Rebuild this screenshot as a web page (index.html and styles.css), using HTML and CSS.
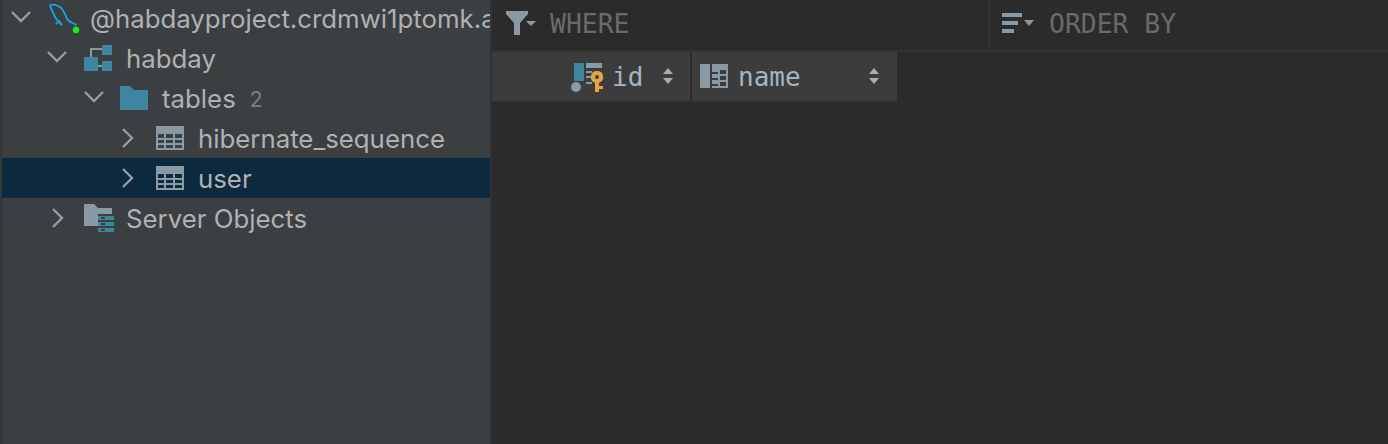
FILE: index.html
```html
<!DOCTYPE html>
<html lang="en">
<head>
  <meta charset="UTF-8" />
  <title>habday - user</title>
  <link rel="stylesheet" href="styles.css">
</head>
<body>
  <div class="app">
    <div class="tree">
      <div class="row level-0">
        <svg class="chevron" viewBox="0 0 20 20"><path d="M2 4l9 9 9-9"/></svg>
        <svg class="icon" viewBox="0 0 32 32">
          <path class="dolphin" d="M2 3c2-.5 5-.5 7 .5 3 1 5 3 6 5 2 3 3 7 5 9.500 1 1.500 3 2.500 5 3 2 .5 3 1 3.500 4M2 3c0 3 3 6 4 10 1 2 2 4 4 6l4 4-3-4-3 3"/>
          <circle class="status" cx="28" cy="28" r="4"/>
        </svg>
        <span class="label">@habdayproject.crdmwi1ptomk.a</span>
      </div>
      <div class="row level-1">
        <svg class="chevron" viewBox="0 0 20 20"><path d="M2 4l9 9 9-9"/></svg>
        <svg class="icon" viewBox="0 0 28 26">
          <path class="link" d="M7 12V4h11M14 21h4"/>
          <rect class="teal" x="18" y="0" width="10" height="10"/>
          <rect class="teal" x="0" y="12" width="14" height="14"/>
          <rect class="teal" x="18" y="16" width="10" height="10"/>
        </svg>
        <span class="label">habday</span>
      </div>
      <div class="row level-2">
        <svg class="chevron" viewBox="0 0 20 20"><path d="M2 4l9 9 9-9"/></svg>
        <svg class="icon" viewBox="0 0 28 24">
          <path class="teal" d="M0 0h10l4 4h14v20H0z"/>
        </svg>
        <span class="label">tables</span>
        <span class="count">2</span>
      </div>
      <div class="row level-3">
        <svg class="chevron" viewBox="0 0 20 20"><path d="M7 1l9 9-9 9"/></svg>
        <svg class="icon" viewBox="0 0 28 24">
          <path class="grey" fill-rule="evenodd" d="M0 0h28v24H0zM2 8v4h6V8zm8 0v4h7V8zm9 0v4h7V8zM2 14v3h6v-3zm8 0v3h7v-3zm9 0v3h7v-3zM2 19v3h6v-3zm8 0v3h7v-3zm9 0v3h7v-3z"/>
        </svg>
        <span class="label">hibernate_sequence</span>
      </div>
      <div class="row level-3 selected">
        <svg class="chevron" viewBox="0 0 20 20"><path d="M7 1l9 9-9 9"/></svg>
        <svg class="icon" viewBox="0 0 28 24">
          <path class="grey" fill-rule="evenodd" d="M0 0h28v24H0zM2 8v4h6V8zm8 0v4h7V8zm9 0v4h7V8zM2 14v3h6v-3zm8 0v3h7v-3zm9 0v3h7v-3zM2 19v3h6v-3zm8 0v3h7v-3zm9 0v3h7v-3z"/>
        </svg>
        <span class="label">user</span>
      </div>
      <div class="row level-1">
        <svg class="chevron" viewBox="0 0 20 20"><path d="M7 1l9 9-9 9"/></svg>
        <svg class="icon server-icon" viewBox="0 0 30 28">
          <path class="grey" d="M0 0h10l4 4h14v6H14v12H0z"/>
          <path class="teal" fill-rule="evenodd" d="M14 12h16v4H14zm3 1v2h4v-2zM14 18h16v4H14zm3 1v2h4v-2zM14 24h16v4H14zm3 1v2h4v-2z"/>
        </svg>
        <span class="label">Server Objects</span>
      </div>
    </div>

    <div class="data">
      <div class="filters">
        <div class="filter where">
          <svg class="filter-icon" viewBox="0 0 32 24">
            <path class="grey" d="M0 0h22v3l-8 9v12H8V12L0 3z"/>
            <path class="grey" d="M20 10h10l-5 5z"/>
          </svg>
          <span>WHERE</span>
        </div>
        <div class="filter order">
          <svg class="filter-icon" viewBox="0 0 32 24">
            <path class="grey" d="M0 2h20v4H0zM0 10h16v4H0zM0 18h12v4H0z"/>
            <path class="grey" d="M22 9h10l-5 6z"/>
          </svg>
          <span>ORDER BY</span>
        </div>
      </div>
      <div class="columns">
        <div class="col col-id">
          <svg class="col-icon key-icon" viewBox="0 0 34 30">
            <rect class="teal" x="3" y="1" width="10" height="18"/>
            <circle class="grey" cx="5" cy="25" r="5"/>
            <path class="grey" d="M15 1h16v5H15zM15 9h6v2h-6zM15 14h5v2h-5zM15 20h6v2h-6z"/>
            <path class="key" fill-rule="evenodd" d="M26 9a6 6 0 0 1 2 11.700V24h4v3h-4v3h-4v-9.300A6 6 0 0 1 26 9zm0 4a2 2 0 1 0 0 4 2 2 0 0 0 0-4z"/>
          </svg>
          <span class="col-name">id</span>
          <svg class="sort" viewBox="0 0 10 16"><path d="M5 0l5 6H0zM0 10h10l-5 6z"/></svg>
        </div>
        <div class="col col-name-cell">
          <svg class="col-icon" viewBox="0 0 28 24">
            <path class="grey" fill-rule="evenodd" d="M0 0h10v24H0zM12 0h16v24H12zm8 6v4h6V6zm0 6v4h6v-4zm0 6v4h6v-4zM12 8v2h6V8zm0 6v2h6v-2zm0 6v2h6v-2z"/>
          </svg>
          <span class="col-name">name</span>
          <svg class="sort" viewBox="0 0 10 16"><path d="M5 0l5 6H0zM0 10h10l-5 6z"/></svg>
        </div>
      </div>
    </div>
  </div>
</body>
</html>
```

FILE: styles.css
```css
html, body {
  margin: 0;
  padding: 0;
  height: 444px;
  overflow: hidden;
  background: #2b2b2b;
}

.app {
  display: flex;
  height: 444px;
}

svg {
  display: block;
  flex: none;
  overflow: visible;
}

.teal { fill: #3e86a0; }
.grey { fill: #8a9aa5; }
.key { fill: #e5a444; }

/* tree on the left */
.tree {
  width: 488px;
  flex: none;
  margin-left: 2px;
  box-shadow: -2px 0 0 #333638;
  background: #3c3f41;
  border-right: 2px solid #323232;
  overflow: hidden;
  font-family: Inter, "Liberation Sans", sans-serif;
  font-size: 25.800px;
  color: #afb1b3;
}

.row {
  display: flex;
  align-items: center;
  height: 40px;
  white-space: nowrap;
}

.tree .row:first-child {
  margin-top: -2px;
}

.level-0 { padding-left: 8px; }
.level-1 { padding-left: 44px; }
.level-2 { padding-left: 81px; }
.level-3 { padding-left: 114px; }

.selected {
  background: #0d293e;
}

.chevron {
  width: 20px;
  height: 20px;
  margin-right: 18px;
  fill: none;
  stroke: #9a9c9e;
  stroke-width: 2.400;
}

.level-0 .chevron { margin-right: 20px; }
.level-2 .chevron { margin-right: 17px; }
.level-3 .chevron { margin-right: 20px; }

.icon {
  width: 28px;
  height: 24px;
  margin-right: 14px;
}

.level-0 .icon {
  width: 32px;
  height: 32px;
  margin: 0 10px 0 -2px;
}

.level-1 .icon {
  height: 26px;
}

.level-1 .server-icon {
  width: 30px;
  height: 28px;
  margin-right: 12px;
}

.dolphin {
  fill: none;
  stroke: #18a4e4;
  stroke-width: 1.800;
}

.status {
  fill: #22e51f;
  stroke: #2f3a2f;
  stroke-width: 1;
}

.link {
  fill: none;
  stroke: #8a9aa5;
  stroke-width: 2;
}

.label {
  padding-top: 2px;
  line-height: 38px;
}

.count {
  margin-left: 14px;
  padding-top: 2px;
  font-size: 21px;
  color: #7d8083;
}

/* filters and result grid */
.data {
  flex: 1;
  min-width: 0;
  font-family: "DejaVu Sans Mono", "Liberation Mono", monospace;
}

.filters {
  display: flex;
  height: 50px;
  border-bottom: 2px solid #323232;
  font-size: 26.400px;
  color: #6a6a6a;
}

.filter {
  display: flex;
  align-items: center;
  padding-bottom: 4px;
}

.where {
  width: 498px;
  padding-left: 14px;
  box-sizing: border-box;
  border-right: 2px solid #323232;
}

.order {
  padding-left: 12px;
}

.filter-icon {
  width: 32px;
  height: 24px;
  margin-right: 12px;
}

.order .filter-icon {
  margin-right: 15px;
}

.columns {
  display: flex;
  height: 50px;
  font-size: 26px;
  color: #a4b4c2;
}

.col {
  display: flex;
  align-items: center;
  box-sizing: border-box;
  height: 50px;
  background: #3c3c3c;
  border-bottom: 2px solid #343638;
}

.col-id {
  width: 198px;
  padding-left: 79px;
  margin-right: 2px;
}

.col-name-cell {
  width: 205px;
  padding-left: 8px;
}

.col-icon {
  width: 28px;
  height: 24px;
  margin-right: 10px;
}

.key-icon {
  width: 34px;
  height: 30px;
  margin: 2px 7px 0 0;
}

.col-name {
  flex: 1;
  padding-top: 2px;
}

.sort {
  width: 10px;
  height: 16px;
  fill: #a9adb0;
  margin-right: 18px;
}

.col-id .sort {
  margin-right: 17px;
}
```
